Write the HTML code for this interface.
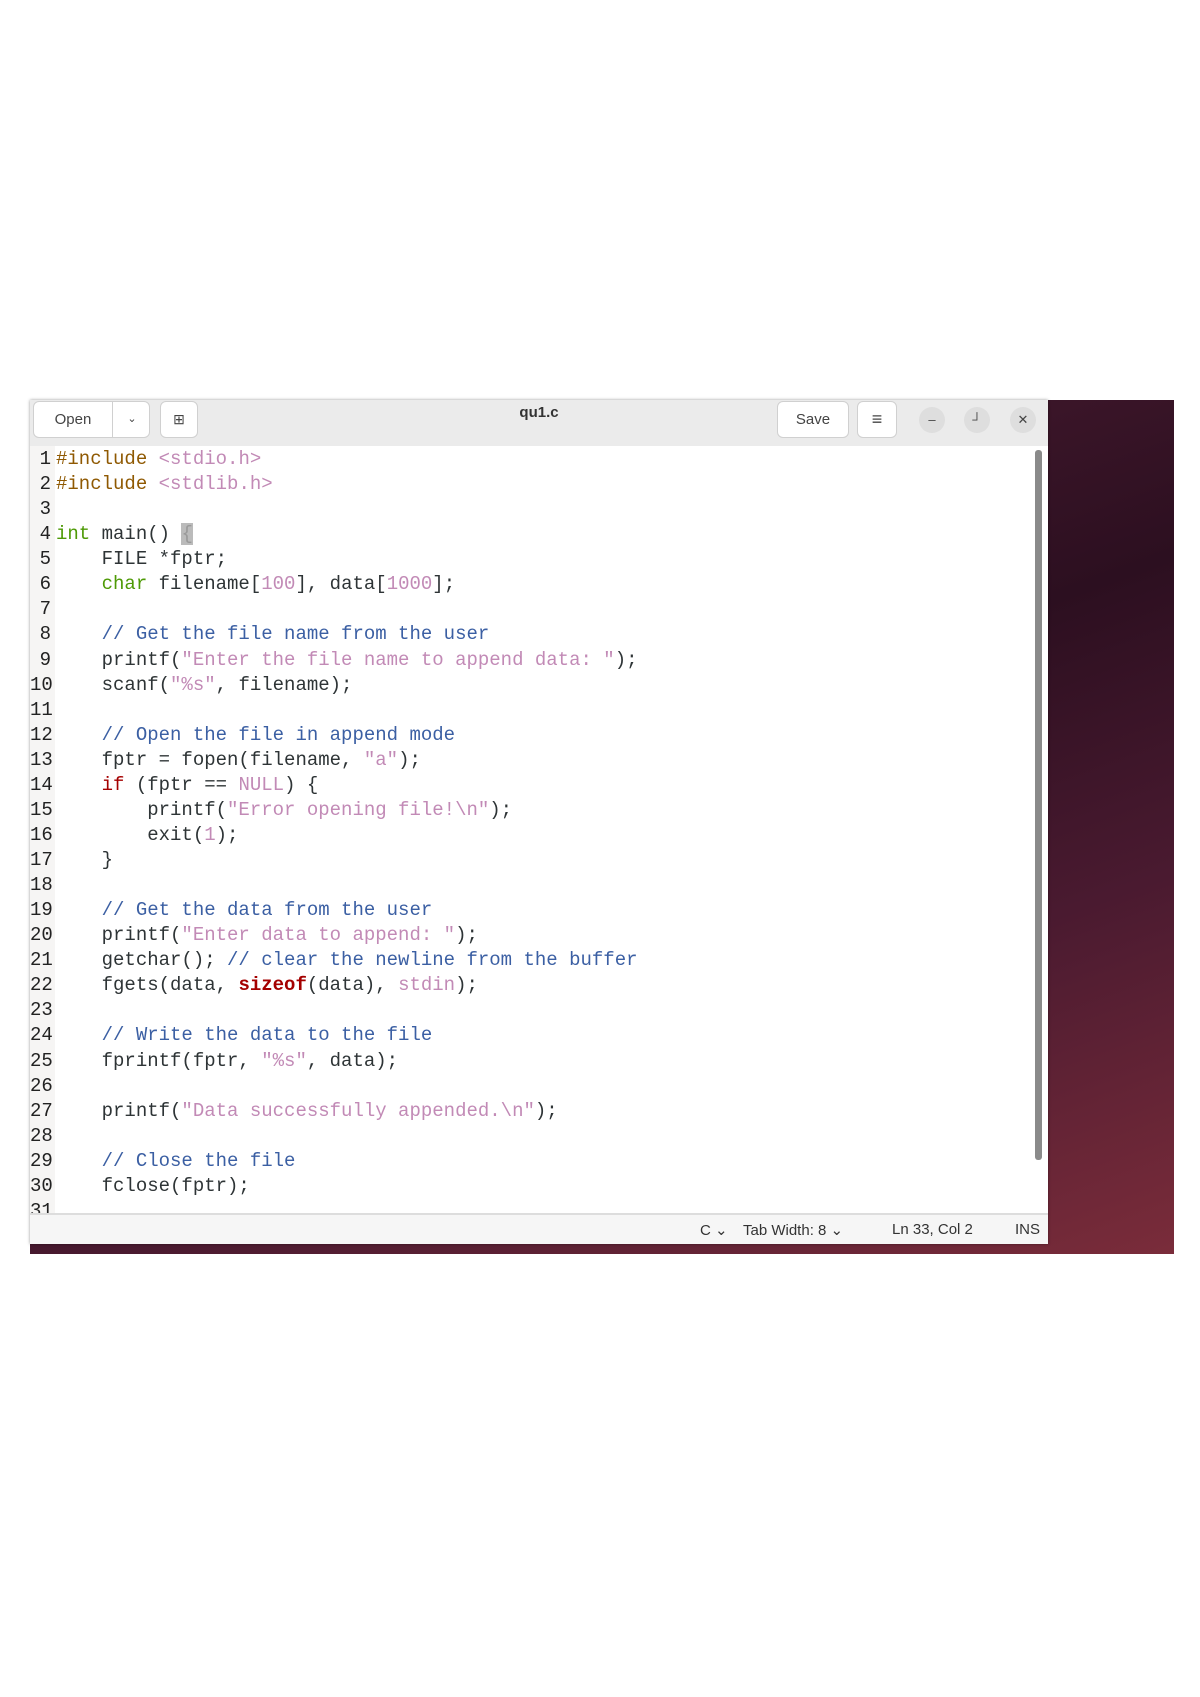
<!DOCTYPE html>
<html><head><meta charset="utf-8"><style>
*{margin:0;padding:0;box-sizing:border-box}
body{width:1200px;height:1697px;background:#fff;position:relative;overflow:hidden;font-family:"Liberation Sans",sans-serif}
.desk{position:absolute;left:30px;top:400px;width:1144px;height:854px;background:linear-gradient(160deg,#4f1f3b 0%,#3a1528 30%,#2c0f20 45%,#4a1a30 70%,#7a2c3a 100%)}
.win{position:absolute;left:30px;top:400px;width:1018px;height:844px;background:#fff;box-shadow:0 0 3px rgba(0,0,0,.4)}
.tb{position:absolute;left:0;top:0;width:100%;height:46px;background:#ebebeb}
.btn{position:absolute;top:1px;height:37px;background:#fff;border:1px solid #d0d0d0;border-radius:6px;color:#444;font-size:15px;text-align:center;line-height:35px}
.circ{position:absolute;top:7px;width:26px;height:26px;border-radius:13px;background:#dedede;color:#444;font-size:13px;text-align:center;line-height:26px}
.gut{position:absolute;left:0;top:46px;width:25px;height:767px;background:#f6f5f4}
.code{position:absolute;left:0;top:47px;width:1006px;height:766px;overflow:hidden;font-family:"Liberation Mono",monospace;font-size:19px;line-height:25.06px;color:#2e3436;white-space:pre}
.ln{display:inline-block;width:21px;text-align:right;margin-right:5px;color:#222}
.c{color:#3b5fa3}.s{color:#c28ab6}.k{color:#4e9a06}.r{color:#a40000}.b{color:#a40000;font-weight:bold}.p{color:#8f5902}
.sb{position:absolute;left:1005px;top:50px;width:7px;height:710px;background:#8a8a8a;border-radius:3px}
.st{position:absolute;left:0;top:813px;width:100%;height:31px;background:#f6f6f6;border-top:2px solid #ddd;font-size:15px;color:#333}
.st span{position:absolute;top:6px}
</style></head><body>
<div class="desk"></div>
<div class="win">
<div class="tb">
<div class="btn" style="left:3px;width:117px;border-radius:6px"><span style="position:absolute;left:0;width:78px">Open</span><span style="position:absolute;left:78px;top:0;width:1px;height:35px;background:#d0d0d0"></span><span style="position:absolute;left:79px;width:38px;font-size:11px">&#8964;</span></div>
<div class="btn" style="left:130px;width:38px;font-size:14px">&#8862;</div>
<div style="position:absolute;left:0;width:100%;top:4px;text-align:center;font-size:15px;font-weight:bold;color:#333">qu1.c</div>
<div class="btn" style="left:747px;width:72px">Save</div>
<div class="btn" style="left:827px;width:40px;font-size:18px">&#8801;</div>
<div class="circ" style="left:889px">&#8211;</div>
<div class="circ" style="left:934px">&#9496;</div>
<div class="circ" style="left:980px">&#10005;</div>
</div>
<div class="gut"></div>
<div class="code"><span class="ln">1</span><span class="p">#include</span> <span class="s">&lt;stdio.h&gt;</span>
<span class="ln">2</span><span class="p">#include</span> <span class="s">&lt;stdlib.h&gt;</span>
<span class="ln">3</span>
<span class="ln">4</span><span class="k">int</span> main() <span style="background:#bbb;color:#999">{</span>
<span class="ln">5</span>    FILE *fptr;
<span class="ln">6</span>    <span class="k">char</span> filename[<span class="s">100</span>], data[<span class="s">1000</span>];
<span class="ln">7</span>
<span class="ln">8</span>    <span class="c">// Get the file name from the user</span>
<span class="ln">9</span>    printf(<span class="s">"Enter the file name to append data: "</span>);
<span class="ln">10</span>    scanf(<span class="s">"%s"</span>, filename);
<span class="ln">11</span>
<span class="ln">12</span>    <span class="c">// Open the file in append mode</span>
<span class="ln">13</span>    fptr = fopen(filename, <span class="s">"a"</span>);
<span class="ln">14</span>    <span class="r">if</span> (fptr == <span class="s">NULL</span>) {
<span class="ln">15</span>        printf(<span class="s">"Error opening file!\n"</span>);
<span class="ln">16</span>        exit(<span class="s">1</span>);
<span class="ln">17</span>    }
<span class="ln">18</span>
<span class="ln">19</span>    <span class="c">// Get the data from the user</span>
<span class="ln">20</span>    printf(<span class="s">"Enter data to append: "</span>);
<span class="ln">21</span>    getchar(); <span class="c">// clear the newline from the buffer</span>
<span class="ln">22</span>    fgets(data, <span class="b">sizeof</span>(data), <span class="s">stdin</span>);
<span class="ln">23</span>
<span class="ln">24</span>    <span class="c">// Write the data to the file</span>
<span class="ln">25</span>    fprintf(fptr, <span class="s">"%s"</span>, data);
<span class="ln">26</span>
<span class="ln">27</span>    printf(<span class="s">"Data successfully appended.\n"</span>);
<span class="ln">28</span>
<span class="ln">29</span>    <span class="c">// Close the file</span>
<span class="ln">30</span>    fclose(fptr);
<span class="ln">31</span>
</div>
<div class="sb"></div>
<div class="st"><span style="left:670px">C &#8964;</span><span style="left:713px">Tab Width: 8 &#8964;</span><span style="left:862px">Ln 33, Col 2</span><span style="left:985px">INS</span></div>
</div>
</body></html>
